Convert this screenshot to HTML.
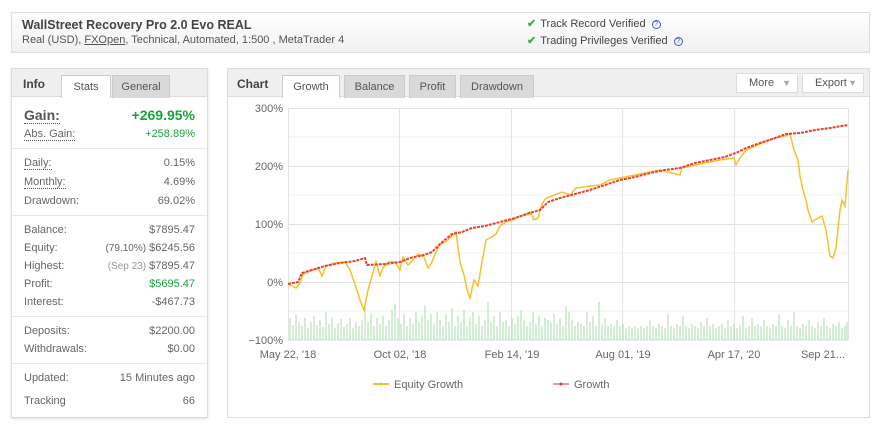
<!DOCTYPE html>
<html><head><meta charset="utf-8"><style>
*{margin:0;padding:0;box-sizing:border-box}
body{width:880px;height:430px;background:#fff;font-family:"Liberation Sans",Arial,sans-serif;color:#555;position:relative;overflow:hidden}
.box{position:absolute;border:1px solid #ddd;background:#fff}
.hdr{left:11px;top:12px;width:859px;height:41px;background:linear-gradient(#fff,#f1f1f1)}
.t1{position:absolute;left:10px;top:5px;font-size:12.5px;font-weight:bold;color:#444}
.t2{position:absolute;left:10px;top:21px;font-size:11px;color:#555}
.v{position:absolute;left:515px;font-size:11px;color:#444}
.ck{color:#3bb34a;font-weight:bold;margin-right:4px}
.q{display:inline-block;width:9px;height:9px;border:1px solid #3a5fcd;border-radius:50%;font-size:7px;line-height:7px;text-align:center;color:#3a5fcd;margin-left:6px;vertical-align:1px}
.ph{position:absolute;left:0;top:0;right:0;height:28px;background:#efefef;border-bottom:1px solid #ddd}
.pt{position:absolute;top:8px;font-size:12px;font-weight:bold;color:#444}
.tab{position:absolute;top:6px;height:23px;font-size:11px;text-align:center;line-height:22px;color:#555;background:#d9d9d9;border:1px solid #ccc;border-bottom:none}
.tab.on{background:#fff;height:23px}
.r{position:absolute;left:12px;right:12px;font-size:11px;color:#666}
.r span.l{border-bottom:1px dotted #555}
.r b{position:absolute;right:0;font-weight:normal}
.sep{position:absolute;left:0;right:0;height:1px;background:#e8e8e8}
.g{color:#1aa33c}
.btn{position:absolute;top:4px;height:20px;background:#fff;border:1px solid #ddd;font-size:11px;line-height:18px;padding-left:12px;color:#555}
.btn i{position:absolute;right:6px;top:0;font-style:normal;color:#aaa;font-size:9px}
</style></head><body>
<div class="box hdr">
<div class="t1">WallStreet Recovery Pro 2.0 Evo REAL</div>
<div class="t2">Real (USD), <u>FXOpen</u>, Technical, Automated, 1:500 , MetaTrader 4</div>
<div class="v" style="top:4px"><span class="ck">✔</span>Track Record Verified<span class="q">?</span></div>
<div class="v" style="top:21px"><span class="ck">✔</span>Trading Privileges Verified<span class="q">?</span></div>
</div>

<div class="box" style="left:11px;top:68px;width:197px;height:350px;box-shadow:0 1px 2px #ddd">
<div class="ph"></div>
<div class="pt" style="left:11px">Info</div>
<div class="tab on" style="left:49px;width:50px">Stats</div>
<div class="tab" style="left:100px;width:58px">General</div>
<div class="r" style="top:38px;font-size:14px;font-weight:bold;color:#555"><span class="l">Gain:</span><b class="g" style="font-weight:bold">+269.95%</b></div>
<div class="r" style="top:59px"><span class="l">Abs. Gain:</span><b class="g">+258.89%</b></div>
<div class="sep" style="top:79px"></div>
<div class="r" style="top:88px"><span class="l">Daily:</span><b>0.15%</b></div>
<div class="r" style="top:107px"><span class="l">Monthly:</span><b>4.69%</b></div>
<div class="r" style="top:126px">Drawdown:<b>69.02%</b></div>
<div class="sep" style="top:146px"></div>
<div class="r" style="top:155px">Balance:<b>$7895.47</b></div>
<div class="r" style="top:173px">Equity:<b><span style="font-size:10px">(79.10%)</span> $6245.56</b></div>
<div class="r" style="top:191px">Highest:<b><span style="font-size:10px;color:#999">(Sep 23)</span> $7895.47</b></div>
<div class="r" style="top:209px">Profit:<b class="g">$5695.47</b></div>
<div class="r" style="top:227px">Interest:<b>-$467.73</b></div>
<div class="sep" style="top:247px"></div>
<div class="r" style="top:256px">Deposits:<b>$2200.00</b></div>
<div class="r" style="top:274px">Withdrawals:<b>$0.00</b></div>
<div class="sep" style="top:294px"></div>
<div class="r" style="top:303px">Updated:<b>15 Minutes ago</b></div>
<div class="r" style="top:326px">Tracking<b>66</b></div>
</div>

<div class="box" style="left:227px;top:68px;width:643px;height:350px">
<div class="ph"></div>
<div class="pt" style="left:9px">Chart</div>
<div class="tab on" style="left:54px;width:58px">Growth</div>
<div class="tab" style="left:116px;width:61px">Balance</div>
<div class="tab" style="left:181px;width:47px">Profit</div>
<div class="tab" style="left:232px;width:74px">Drawdown</div>
<div class="btn" style="left:508px;width:62px">More<i>▼</i></div>
<div class="btn" style="left:574px;width:62px">Export<i>▼</i></div>
</div>

<svg style="position:absolute;left:0;top:0" width="880" height="430" font-family="Liberation Sans,Arial,sans-serif" font-size="11" fill="#666">
<g stroke="#f2f2f2">
<line x1="288" x2="848" y1="137" y2="137"/><line x1="288" x2="848" y1="195" y2="195"/><line x1="288" x2="848" y1="253" y2="253"/><line x1="288" x2="848" y1="311" y2="311"/>
</g>
<g stroke="#e3e3e3">
<line x1="288" x2="848" y1="108.5" y2="108.5"/><line x1="288" x2="848" y1="166.5" y2="166.5"/><line x1="288" x2="848" y1="224.5" y2="224.5"/><line x1="288" x2="848" y1="282.5" y2="282.5"/>
<line x1="288.5" x2="288.5" y1="108" y2="340"/><line x1="399.5" x2="399.5" y1="108" y2="340"/><line x1="511.5" x2="511.5" y1="108" y2="340"/><line x1="622.5" x2="622.5" y1="108" y2="340"/><line x1="734.5" x2="734.5" y1="108" y2="340"/><line x1="848.5" x2="848.5" y1="108" y2="340"/>
</g>
<line x1="288" x2="848" y1="340" y2="340" stroke="#c8d8e8"/>
<g stroke="#a8dca8" stroke-width="1">
<path d="M290 340V318M293 340V325M296 340V315M299 340V322M302 340V326M305 340V318M308 340V328M311 340V322M314 340V316M317 340V325M320 340V320M323 340V327M326 340V312M329 340V324M332 340V318M335 340V328M338 340V323M341 340V319M344 340V327M347 340V324M350 340V318M353 340V328M356 340V322M359 340V326M362 340V320M365 340V303M368 340V322M371 340V313M374 340V326M377 340V318M380 340V324M383 340V316M386 340V326M389 340V320M392 340V310M395 340V304M398 340V318M401 340V324M404 340V314M407 340V326M410 340V318M413 340V324M416 340V312M419 340V322M422 340V316M425 340V306M428 340V320M431 340V314M434 340V324M437 340V312M440 340V320M443 340V326M446 340V314M449 340V322M452 340V308M455 340V326M458 340V316M461 340V322M464 340V310M467 340V326M470 340V318M473 340V312M476 340V324M479 340V316M482 340V326M485 340V320M488 340V302M491 340V322M494 340V316M497 340V326M500 340V312M503 340V322M506 340V320M509 340V326M512 340V318M515 340V324M518 340V316M521 340V310M524 340V320M527 340V326M530 340V322M533 340V312M536 340V324M539 340V316M542 340V326M545 340V318M548 340V320M551 340V322M554 340V314M557 340V324M560 340V318M563 340V326M566 340V306M569 340V312M572 340V320M575 340V326M578 340V322M581 340V324M584 340V326M587 340V312M590 340V322M593 340V316M596 340V326M599 340V302M602 340V324M605 340V318M608 340V326M611 340V324M614 340V326M617 340V320M620 340V326M623 340V324M626 340V328M629 340V326M632 340V328M635 340V326M638 340V328M641 340V326M644 340V328M647 340V326M650 340V320M653 340V326M656 340V328M659 340V324M662 340V326M665 340V328M668 340V314M671 340V326M674 340V328M677 340V324M680 340V326M683 340V316M686 340V326M689 340V328M692 340V324M695 340V326M698 340V328M701 340V322M704 340V326M707 340V318M710 340V326M713 340V324M716 340V328M719 340V326M722 340V324M725 340V328M728 340V320M731 340V326M734 340V324M737 340V328M740 340V326M743 340V316M746 340V328M749 340V326M752 340V318M755 340V326M758 340V324M761 340V326M764 340V320M767 340V326M770 340V328M773 340V324M776 340V326M779 340V314M782 340V326M785 340V328M788 340V320M791 340V326M794 340V312M797 340V326M800 340V328M803 340V324M806 340V326M809 340V320M812 340V326M815 340V328M818 340V322M821 340V326M824 340V318M827 340V326M830 340V328M833 340V324M836 340V326M839 340V322M842 340V328M845 340V326M847 340V322"/>
</g>
<polyline fill="none" stroke="#f7c02a" stroke-width="1.5" points="288,284 292,286 296,288 300,283 303,274 310,271 318,268 322,276 326,266 335,263 345,262 350,270 355,284 360,300 364,310 368,290 372,276 376,262 380,276 383,268 388,262 395,262 400,270 403,257 408,265 413,260 418,254 424,257 428,268 432,262 436,252 440,244 446,242 452,236 456,232 460,262 464,275 467,290 470,298 474,280 478,286 482,262 486,240 490,238 496,234 500,226 506,222 512,220 520,216 526,214 530,212 534,220 538,218 542,204 546,198 552,196 562,192 570,195 576,188 590,186 600,185 610,180 620,178 640,174 660,170 680,175 682,168 700,164 720,160 734,158 736,165 740,158 746,150 760,144 775,138 785,136 790,134 794,150 798,160 800,176 803,190 806,200 808,210 812,222 815,220 818,218 822,216 826,230 830,256 833,258 836,248 840,210 842,200 845,206 848,170"/>
<polyline fill="none" stroke="#e8402a" stroke-width="2" stroke-dasharray="3 1" points="288,284 298,282 302,273 312,270 325,266 340,263 355,261 365,258 367,265 385,264 400,262 410,258 424,255 432,252 440,244 452,234 462,232 472,228 485,226 500,222 515,218 530,213 540,210 548,202 560,198 575,194 590,190 605,185 620,180 635,177 650,173 665,170 680,168 695,163 710,160 725,157 738,152 746,148 760,143 775,138 786,134 800,133 815,130 830,128 848,125"/>
<g text-anchor="end"><text x="283" y="112">300%</text><text x="283" y="170">200%</text><text x="283" y="228">100%</text><text x="283" y="286">0%</text><text x="283" y="344">−100%</text></g>
<g text-anchor="middle"><text x="288" y="358">May 22, '18</text><text x="400" y="358">Oct 02, '18</text><text x="512" y="358">Feb 14, '19</text><text x="623" y="358">Aug 01, '19</text><text x="734" y="358">Apr 17, '20</text><text x="823" y="358">Sep 21...</text></g>
<line x1="373" x2="389" y1="384" y2="384" stroke="#f7c02a" stroke-width="2"/><circle cx="381" cy="384" r="1.5" fill="#f7c02a"/>
<text x="394" y="388">Equity Growth</text>
<line x1="553" x2="569" y1="384" y2="384" stroke="#f39a9a" stroke-width="2"/><circle cx="561" cy="384" r="1.5" fill="#e8402a"/>
<text x="574" y="388">Growth</text>
</svg>
</body></html>
